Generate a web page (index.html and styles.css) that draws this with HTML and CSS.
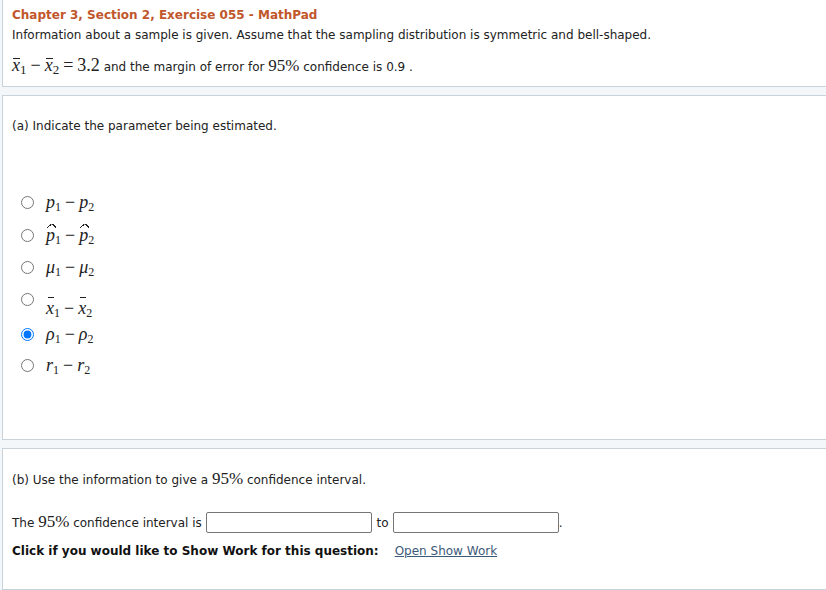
FILE: index.html
```html
<!DOCTYPE html>
<html>
<head>
<meta charset="utf-8">
<link rel="stylesheet" href="styles.css">
</head>
<body>
<div class="page">
  <section class="box box-intro">
    <div class="title">Chapter 3, Section 2, Exercise 055 - MathPad</div>
    <p class="line">Information about a sample is given. Assume that the sampling distribution is symmetric and bell-shaped.</p>
    <p class="line line-math"><span class="m"><span class="ov">x</span><sub>1</sub><span class="op">&minus;</span><span class="ov">x</span><sub>2</sub><span class="op">=</span>3.2</span> and the margin of error for <span class="m pct">95%</span> confidence is 0.9 .</p>
  </section>
  <section class="box box-a">
    <p class="q">(a) Indicate the parameter being estimated.</p>
    <div class="options">
      <label class="opt o1"><input type="radio" name="p"><span class="m mi">p<sub>1</sub><span class="op">&minus;</span>p<sub>2</sub></span></label>
      <label class="opt o2"><input type="radio" name="p"><span class="m mi"><span class="hat">p</span><sub>1</sub><span class="op">&minus;</span><span class="hat">p</span><sub>2</sub></span></label>
      <label class="opt o3"><input type="radio" name="p"><span class="m mi">&mu;<sub>1</sub><span class="op">&minus;</span>&mu;<sub>2</sub></span></label>
      <label class="opt o4"><input type="radio" name="p"><span class="m mi xb"><span class="bar">x</span><sub>1</sub><span class="op">&minus;</span><span class="bar">x</span><sub>2</sub></span></label>
      <label class="opt o5"><input type="radio" name="p" checked><span class="m mi">&rho;<sub>1</sub><span class="op">&minus;</span>&rho;<sub>2</sub></span></label>
      <label class="opt o6"><input type="radio" name="p"><span class="m mi">r<sub>1</sub><span class="op">&minus;</span>r<sub>2</sub></span></label>
    </div>
  </section>
  <section class="box box-b">
    <p class="q">(b) Use the information to give a <span class="m pct">95%</span> confidence interval.</p>
    <div class="interval"><span>The <span class="m pct">95%</span> confidence interval is&nbsp;</span><input class="field" type="text"><span class="to">to</span><input class="field" type="text"><span>.</span></div>
    <div class="showwork"><b>Click if you would like to Show Work for this question:</b><a href="#" class="link">Open Show Work</a></div>
  </section>
</div>
</body>
</html>
```
FILE: styles.css
```css
html, body {
  margin: 0;
  padding: 0;
  background: #f3f7fa;
}
body {
  font-family: Verdana, "DejaVu Sans", sans-serif;
  font-size: 12px;
  color: #222;
}
.page {
  width: 826px;
  height: 590px;
  overflow: hidden;
  display: flex;
  flex-direction: column;
  gap: 8px;
}
.box {
  background: #fff;
  margin-left: 2px;
  border-left: 1px solid #c8d2da;
  border-top: 1px solid #c8d2da;
  border-bottom: 1px solid #c8d2da;
  padding-left: 9px;
  box-sizing: border-box;
}
.box-intro {
  border-top: none;
  height: 87px;
  padding-top: 7px;
}
.title {
  color: #c1562b;
  font-weight: bold;
  font-size: 12px;
  line-height: 16px;
}
.line {
  margin: 4px 0 0;
  line-height: 16px;
}
.line-math {
  margin-top: 11px;
  line-height: 22px;
}
.m {
  font-family: "Liberation Serif", "Times New Roman", serif;
  font-size: 18px;
  color: #222;
}
.pct { font-size: 17px; }
.m sub {
  font-size: 13px;
  vertical-align: -3px;
  line-height: 0;
  font-style: normal;
}
.op {
  font-style: normal;
  margin: 0 4px;
}
.ov {
  font-style: italic;
  position: relative;
  display: inline-block;
}
.ov::before {
  content: "";
  position: absolute;
  left: 1px;
  right: 0;
  top: 4px;
  border-top: 1px solid #222;
}
.mi { font-style: italic; }
.box-a {
  height: 345px;
  padding-top: 22px;
}
.q {
  margin: 0;
  line-height: 16px;
}
.options {
  margin-top: 62px;
  display: flex;
  flex-direction: column;
}
.opt {
  display: flex;
  align-items: flex-start;
  gap: 12px;
  height: 32px;
}
.opt input {
  margin: 0 0 0 9px;
  width: 13px;
  height: 13px;
}
.opt .m {
  line-height: 18px;
  margin-top: -3px;
}
.opt .m sub { font-size: 12px; }
.o1 { height: 33px; }
.o4 { height: 35px; }
.o5 { height: 31px; }
.o4 .m { margin-top: 6px; }
.hat {
  position: relative;
  display: inline-block;
}
.hat::before {
  content: "";
  position: absolute;
  left: 1px;
  top: -2px;
  width: 9px;
  height: 4px;
  background-image: linear-gradient(to top left, transparent 42%, #222 42%, #222 62%, transparent 62%), linear-gradient(to top right, transparent 42%, #222 42%, #222 62%, transparent 62%);
  background-size: 50% 100%, 50% 100%;
  background-position: left top, right top;
  background-repeat: no-repeat;
}
.bar {
  position: relative;
  display: inline-block;
}
.bar::before {
  content: "";
  position: absolute;
  left: 2px;
  top: -2px;
  width: 6px;
  border-top: 1px solid #222;
}
.box-b {
  flex: 1;
  padding-top: 22px;
}
.interval {
  margin-top: 23px;
  line-height: 22px;
  display: flex;
  align-items: center;
}
.field {
  width: 166px;
  height: 21px;
  box-sizing: border-box;
  border: 1px solid #767676;
  border-radius: 2px;
  margin: 0;
  padding: 0;
}
.to {
  margin: 0 4px 0 5px;
}
.showwork {
  margin-top: 9px;
  line-height: 16px;
}
.showwork b {
  font-weight: bold;
  color: #111;
}
.link {
  margin-left: 16px;
  color: #3c5a78;
  text-decoration: underline;
}
```
